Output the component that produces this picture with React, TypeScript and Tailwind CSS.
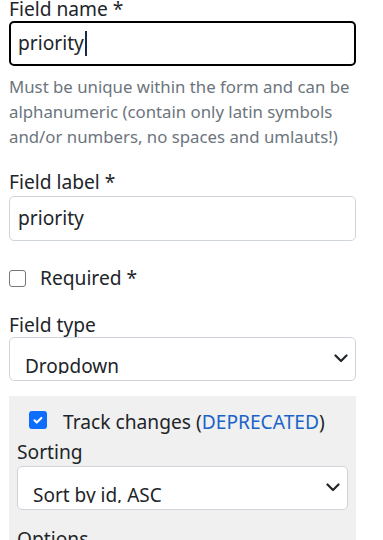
import React from "react";

const font = { fontFamily: '"Noto Sans", "Segoe UI", sans-serif' };

function Chevron() {
  return (
    <svg width="14" height="9" viewBox="0 0 14 9" className="shrink-0">
      <path d="M1.5 1.5l5.5 5.5 5.5-5.5" fill="none" stroke="#212529" strokeWidth="2.2" strokeLinecap="round" strokeLinejoin="round" />
    </svg>
  );
}

// mimics the clipped, low-sitting value text of the native select
function FakeSelect({ value, className }: { value: string; className?: string }) {
  return (
    <div className={`relative h-[44px] rounded-[5px] border border-[#ced4da] bg-white ${className ?? ""}`}>
      <div className="absolute left-[15px] top-0 h-[36px] overflow-hidden pt-[14px] text-[19px] leading-[29px] text-[#212529]">
        {value}
      </div>
      <div className="absolute right-[7px] top-[16px]">
        <Chevron />
      </div>
    </div>
  );
}

export default function App() {
  return (
    <div className="h-[540px] w-[383px] overflow-hidden bg-white text-[#212529]" style={font}>
      <div className="ml-[9px] flex w-[347px] flex-col">
        <label className="-mt-[3px] text-[19.2px] leading-[24px]">Field name *</label>
        <div className="flex h-[45px] items-center rounded-[5px] border-2 border-black px-[7px] text-[19.2px]">
          <span>priority</span>
          <span className="ml-px inline-block h-[25px] w-[2px] bg-[#1a2a4a]" />
        </div>
        <p className="mt-[8px] text-[16.8px] leading-[25px] text-[#6c757d]">
          Must be unique within the form and can be alphanumeric (contain only latin symbols and/or numbers, no spaces and umlauts!)
        </p>
        <label className="mt-[21px] text-[19.2px] leading-[24px]">Field label *</label>
        <div className="mt-[2px] flex h-[45px] items-center rounded-[5px] border border-[#ced4da] px-[8px] text-[19.2px]">
          priority
        </div>
        <div className="mt-[23px] flex h-[29px] items-center">
          <span className="h-[17px] w-[17px] rounded-[3px] border-[1.3px] border-[#767676] bg-white" />
          <span className="ml-[14px] text-[19.2px]">Required *</span>
        </div>
        <label className="mt-[20px] text-[19.2px] leading-[24px]">Field type</label>
        <FakeSelect value="Dropdown" />
        <div className="mt-[15px] flex flex-col bg-[#f0f0f0] px-[8px] pb-[20px]">
          <div className="mt-[13.5px] flex items-start pl-[12px]">
            <span className="mt-px flex h-[18px] w-[18px] items-center justify-center rounded-[3px] bg-[#0d6efd]">
              <svg width="14" height="14" viewBox="0 0 20 20">
                <path d="M5 10.5l3.2 3.2 6.6-6.6" fill="none" stroke="#fff" strokeWidth="3" strokeLinecap="round" strokeLinejoin="round" />
              </svg>
            </span>
            <span className="ml-[16px] text-[19.2px] leading-[24px]">
              Track changes (<span className="text-[#1b63c9]">DEPRECATED</span>)
            </span>
          </div>
          <label className="mt-[6px] text-[19.2px] leading-[24px]">Sorting</label>
          <FakeSelect value="Sort by id, ASC" className="mt-[2.5px]" />
          <label className="mt-[16.5px] text-[19.2px] leading-[24px]">Options</label>
        </div>
      </div>
    </div>
  );
}
